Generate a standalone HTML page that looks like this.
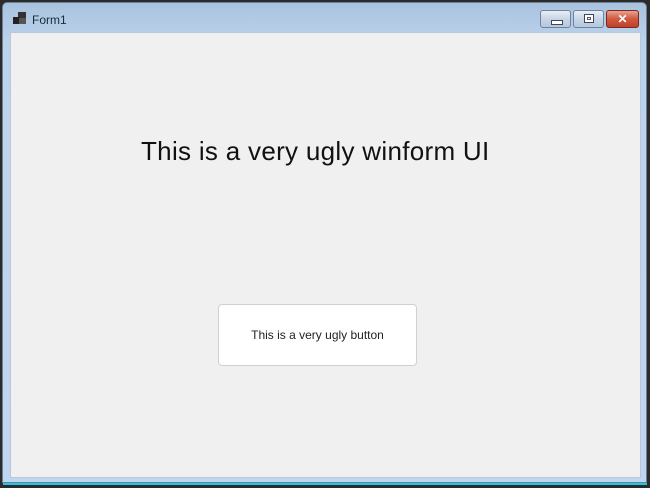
<!DOCTYPE html>
<html><head><style>
body{margin:0;width:650px;height:488px;background:#2b2b2b;position:relative;overflow:hidden;font-family:"Liberation Sans",sans-serif}
.frame{position:absolute;left:2px;top:2px;width:645px;height:481px;background:linear-gradient(#a9c3df,#bcd3ec 40px,#c0d6ee);border:1px solid #6c7f94;box-sizing:border-box;border-radius:5px 5px 0 0}
.cyan{position:absolute;left:3px;top:483px;width:644px;height:2px;background:#1ec8e6}
.client{position:absolute;left:10px;top:32px;width:631px;height:446px;background:#f0f0f0;border:1px solid #b8c8da;box-sizing:border-box}
.title{position:absolute;left:32px;top:13px;font-size:12px;color:#1b2b3b}
.btn{position:absolute;top:10px;height:18px;border:1px solid #6f83a0;border-radius:3px;box-sizing:border-box;background:linear-gradient(#e8eef6,#c7d5e6 50%,#b6c8dd)}
.h{position:absolute;left:141px;top:136px;font-size:26px;letter-spacing:0.3px;color:#111;white-space:nowrap}
.b{position:absolute;left:218px;top:304px;width:199px;height:62px;background:#fff;border:1px solid #d0d0d0;border-radius:4px;box-sizing:border-box;font-size:12px;color:#222;text-align:center;line-height:60px}
</style></head><body>
<div class="frame"></div>
<div class="cyan"></div>
<svg style="position:absolute;left:13px;top:12px" width="14" height="13"><rect x="5" y="0" width="8" height="7" fill="#333"/><rect x="0" y="5" width="7" height="7" fill="#222"/><rect x="6" y="6" width="7" height="6" fill="#555"/></svg>
<div class="title">Form1</div>
<div class="btn" style="left:540px;width:31px"><div style="position:absolute;left:10px;top:9px;width:10px;height:3px;background:#fff;border:1px solid #445"></div></div>
<div class="btn" style="left:573px;width:31px"><div style="position:absolute;left:10px;top:3px;width:8px;height:7px;border:1px solid #445;background:#fff;box-shadow:inset 0 0 0 2px #fff, inset 0 0 0 3px #556"></div></div>
<div class="btn" style="left:606px;width:33px;border-color:#7a2a20;background:linear-gradient(#e9a290,#cf5a3f 50%,#c0402a)"><div style="position:absolute;left:0;width:100%;top:0;text-align:center;color:#fff;font-weight:bold;font-size:12px;line-height:16px">✕</div></div>
<div class="client"></div>
<div class="h">This is a very ugly winform UI</div>
<div class="b">This is a very ugly button</div>
</body></html>
